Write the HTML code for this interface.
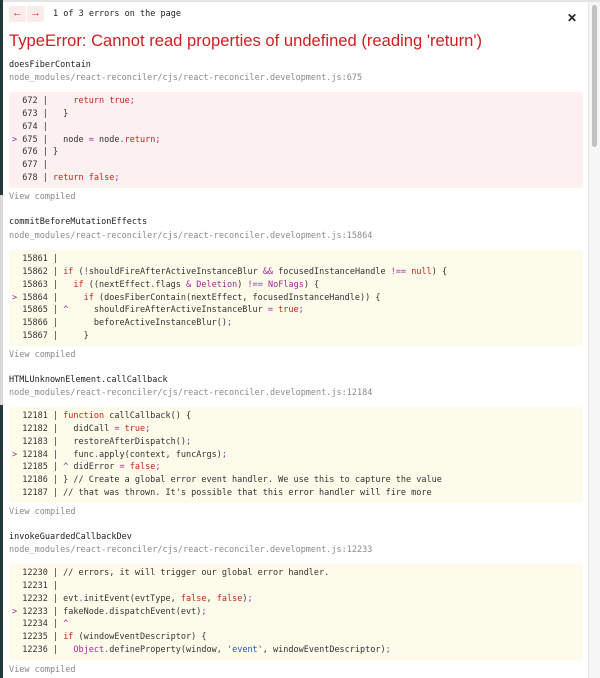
<!DOCTYPE html>
<html><head><meta charset="utf-8"><style>
html,body{margin:0;padding:0;width:600px;height:678px;overflow:hidden;background:#fff;}
body{position:relative;font-family:"Liberation Sans",sans-serif;}
.top{position:absolute;left:0;top:0;width:600px;height:2px;background:#e4e4e4;}
.lstrip{position:absolute;left:0;top:0;width:3px;height:678px;background:#24383a;}
.lstrip2{position:absolute;left:0;top:195px;width:3px;height:210px;background:#d8d8d8;}
.sb{position:absolute;left:588px;top:2px;width:12px;height:676px;background:#f6f6f6;border-left:1px solid #e8e8e8;}
.thumb{position:absolute;left:592px;top:5px;width:5px;height:142px;background:#c2c2c2;border-radius:3px;}
.mono{font-family:"DejaVu Sans Mono",monospace;font-size:8.5px;}
.nav{position:absolute;left:9px;top:6px;height:16px;display:flex;}
.nav span{display:block;width:17px;height:16px;background:#fbecec;color:#d33;font-size:11px;line-height:15px;text-align:center;margin-right:1px;border-radius:2px;}
.navt{position:absolute;left:53px;top:9px;color:#222;}
.close{position:absolute;left:567px;top:12px;font-size:12px;font-weight:bold;color:#222;line-height:12px;}
.title{position:absolute;left:9px;top:31px;font-size:16.6px;color:#ce1f1f;white-space:nowrap;}
.fn{position:absolute;left:9px;color:#222;white-space:pre;}
.path{position:absolute;left:9px;color:#8a8a8a;white-space:pre;}
.vc{position:absolute;left:9px;color:#8a8a8a;white-space:pre;}
.box{position:absolute;left:9px;width:574px;height:96px;border-radius:3px;}
.pink{background:#fcf0f1;}
.yel{background:#fdfbea;}
pre{margin:0;padding:3px 0 0 3px;line-height:12.85px;color:#333;}
.r{color:#c7241c;}.p{color:#a3299a;}.b{color:#2454b8;}
</style></head><body>
<div class="top"></div>
<div class="lstrip"></div><div class="lstrip2"></div>
<div class="sb"></div><div class="thumb"></div>
<div class="nav"><span>←</span><span>→</span></div>
<div class="navt mono">1 of 3 errors on the page</div>
<div class="close">✕</div>
<div class="title">TypeError: Cannot read properties of undefined (reading 'return')</div>

<div class="fn mono" style="top:60px">doesFiberContain</div>
<div class="path mono" style="top:73px">node_modules/react-reconciler/cjs/react-reconciler.development.js:675</div>
<div class="box pink" style="top:92px"><pre class="mono">  672 |     <span class="r">return true</span><span class="p">;</span>
  673 |   }
  674 |
<span class="p">&gt;</span> 675 |   node <span class="p">=</span> node<span class="p">.</span><span class="r">return</span><span class="p">;</span>
  676 | }
  677 |
  678 | <span class="r">return false</span><span class="p">;</span></pre></div>
<div class="vc mono" style="top:192px">View compiled</div>

<div class="fn mono" style="top:217px">commitBeforeMutationEffects</div>
<div class="path mono" style="top:231px">node_modules/react-reconciler/cjs/react-reconciler.development.js:15864</div>
<div class="box yel" style="top:250px"><pre class="mono">  15861 |
  15862 | <span class="r">if</span> (<span class="p">!</span>shouldFireAfterActiveInstanceBlur <span class="p">&amp;&amp;</span> focusedInstanceHandle <span class="p">!==</span> <span class="r">null</span>) {
  15863 |   <span class="r">if</span> ((nextEffect<span class="p">.</span>flags <span class="p">&amp;</span> <span class="p">Deletion</span>) <span class="p">!==</span> <span class="p">NoFlags</span>) {
<span class="p">&gt;</span> 15864 |     <span class="r">if</span> (doesFiberContain(nextEffect, focusedInstanceHandle)) {
  15865 | <span class="p">^</span>     shouldFireAfterActiveInstanceBlur <span class="p">=</span> <span class="r">true</span><span class="p">;</span>
  15866 |       beforeActiveInstanceBlur()<span class="p">;</span>
  15867 |     }</pre></div>
<div class="vc mono" style="top:350px">View compiled</div>

<div class="fn mono" style="top:375px">HTMLUnknownElement.callCallback</div>
<div class="path mono" style="top:388px">node_modules/react-reconciler/cjs/react-reconciler.development.js:12184</div>
<div class="box yel" style="top:407px"><pre class="mono">  12181 | <span class="r">function</span> callCallback() {
  12182 |   didCall <span class="p">=</span> <span class="r">true</span><span class="p">;</span>
  12183 |   restoreAfterDispatch()<span class="p">;</span>
<span class="p">&gt;</span> 12184 |   func<span class="p">.</span>apply(context, funcArgs)<span class="p">;</span>
  12185 | <span class="p">^</span> didError <span class="p">=</span> <span class="r">false</span><span class="p">;</span>
  12186 | } // Create a global error event handler. We use this to capture the value
  12187 | // that was thrown. It's possible that this error handler will fire more</pre></div>
<div class="vc mono" style="top:507px">View compiled</div>

<div class="fn mono" style="top:532px">invokeGuardedCallbackDev</div>
<div class="path mono" style="top:545px">node_modules/react-reconciler/cjs/react-reconciler.development.js:12233</div>
<div class="box yel" style="top:564px"><pre class="mono">  12230 | // errors, it will trigger our global error handler.
  12231 |
  12232 | evt<span class="p">.</span>initEvent(evtType, <span class="r">false</span>, <span class="r">false</span>)<span class="p">;</span>
<span class="p">&gt;</span> 12233 | fakeNode<span class="p">.</span>dispatchEvent(evt)<span class="p">;</span>
  12234 | <span class="p">^</span>
  12235 | <span class="r">if</span> (windowEventDescriptor) {
  12236 |   <span class="p">Object</span><span class="p">.</span>defineProperty(window, <span class="b">'event'</span>, windowEventDescriptor)<span class="p">;</span></pre></div>
<div class="vc mono" style="top:665px">View compiled</div>
</body></html>
